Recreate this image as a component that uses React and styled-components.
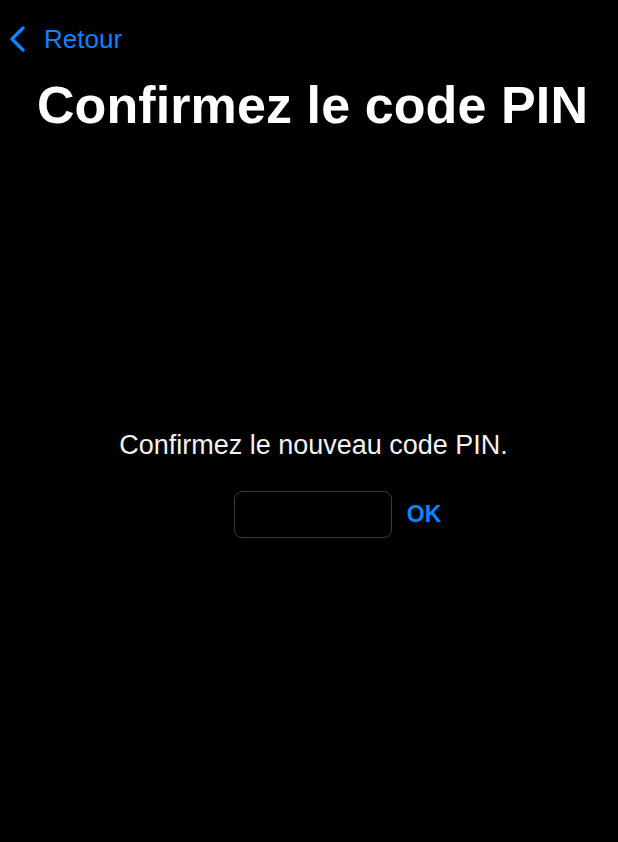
import styled, { createGlobalStyle } from "styled-components";

const GlobalStyle = createGlobalStyle`
    html, body {
        margin: 0;
        padding: 0;
        background: #000;
    }
    body {
        font-family: "Liberation Sans", Arial, sans-serif;
        color: #fff;
    }
`;

const Screen = styled.div`
    width: 618px;
    height: 842px;
    background: #000;
    display: flex;
    flex-direction: column;
`;

const NavBar = styled.div`
    display: flex;
    align-items: center;
    height: 40px;
    padding: 19px 0 0 9px;
`;

const BackButton = styled.button`
    display: flex;
    align-items: center;
    gap: 17px;
    background: none;
    border: none;
    padding: 0;
    color: #0a84ff;
    font-family: inherit;
    font-size: 26px;
    cursor: pointer;
`;

const Title = styled.h1`
    margin: 16px 0 0;
    padding-left: 7px;
    text-align: center;
    font-size: 52px;
    line-height: 60px;
    font-weight: 700;
    letter-spacing: 0.1px;
`;

const Body = styled.div`
    display: flex;
    flex-direction: column;
    align-items: center;
    margin-top: 295px;
    padding-left: 9px;
`;

const Prompt = styled.p`
    margin: 0;
    font-size: 27px;
    line-height: 31px;
    color: #f2f2f2;
`;

const EntryRow = styled.div`
    display: flex;
    align-items: center;
    gap: 15px;
    margin-top: 30px;
    padding-left: 48px;
`;

const PinInput = styled.input`
    width: 158px;
    height: 47px;
    box-sizing: border-box;
    background: #000;
    border: 1px solid #3a3a3c;
    border-radius: 8px;
    color: #fff;
    font-size: 22px;
    outline: none;
`;

const OkButton = styled.button`
    background: none;
    border: none;
    padding: 0;
    color: #0a84ff;
    font-family: inherit;
    font-size: 23px;
    font-weight: 700;
    cursor: pointer;
`;

function Chevron() {
    return (
        <svg width="18" height="26" viewBox="0 0 18 26">
            <path d="M14 2 L3 13 L14 24" fill="none" stroke="#0a84ff" strokeWidth="3.4" strokeLinecap="round" strokeLinejoin="round" />
        </svg>
    );
}

export default function App() {
    return (
        <Screen>
            <GlobalStyle />
            <NavBar>
                <BackButton>
                    <Chevron />
                    Retour
                </BackButton>
            </NavBar>
            <Title>Confirmez le code PIN</Title>
            <Body>
                <Prompt>Confirmez le nouveau code PIN.</Prompt>
                <EntryRow>
                    <PinInput type="password" inputMode="numeric" />
                    <OkButton>OK</OkButton>
                </EntryRow>
            </Body>
        </Screen>
    );
}
